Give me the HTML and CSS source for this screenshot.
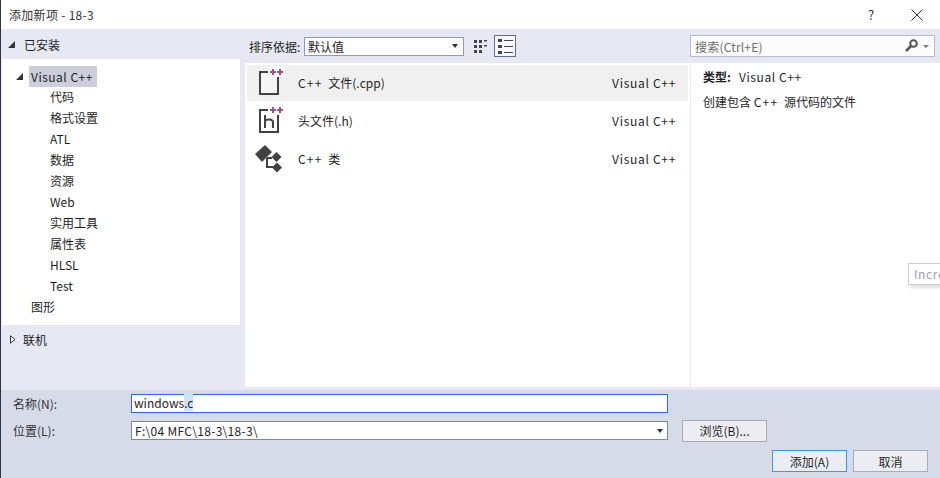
FILE: index.html
```html
<!DOCTYPE html>
<html lang="zh-CN">
<head>
<meta charset="utf-8">
<title>添加新项 - 18-3</title>
<link rel="stylesheet" href="styles.css">
</head>
<body>
<div class="dialog">
  <header class="titlebar">
    <span class="title">添加新项 - 18-3</span>
    <span class="help">?</span>
    <svg class="close" width="12" height="12" viewBox="0 0 12 12"><path d="M.5.5l11 11M11.500.5l-11 11" stroke="#333" fill="none"/></svg>
  </header>
  <main class="main">
    <aside class="side">
      <div class="side-head"><svg class="tri" width="7" height="7" viewBox="0 0 7 7"><path d="M7 0v7H0z" fill="#333"/></svg><span>已安装</span></div>
      <div class="tree">
        <div class="tree-row top"><svg class="tri" width="7" height="7" viewBox="0 0 7 7"><path d="M7 0v7H0z" fill="#333"/></svg><span class="sel">Visual C++</span></div>
        <div class="tree-row sub">代码</div>
        <div class="tree-row sub">格式设置</div>
        <div class="tree-row sub">ATL</div>
        <div class="tree-row sub">数据</div>
        <div class="tree-row sub">资源</div>
        <div class="tree-row sub">Web</div>
        <div class="tree-row sub">实用工具</div>
        <div class="tree-row sub">属性表</div>
        <div class="tree-row sub">HLSL</div>
        <div class="tree-row sub">Test</div>
        <div class="tree-row mid">图形</div>
      </div>
      <div class="side-foot"><svg class="tri-open" width="6" height="9" viewBox="0 0 6 9"><path d="M.5.8l4.500 3.700-4.500 3.700z" fill="#fff" stroke="#333"/></svg><span>联机</span></div>
    </aside>
    <section class="center">
      <div class="toolbar">
        <span class="sort-label">排序依据:</span>
        <div class="sort-select"><span>默认值</span><i class="caret"></i></div>
        <span class="view-btn grid"><svg width="14" height="14" viewBox="0 0 14 14" fill="#444"><path d="M0 0h3v3H0zM5 0h3v3H5zM10 0h3v1.500h-3zM0 5h3v3H0zM5 5h3v3H5zM10 5h3v1.500h-3zM0 10h3v3H0zM5 10h3v3H5z"/></svg></span>
        <span class="view-btn on"><svg width="15" height="15" viewBox="0 0 15 15" fill="#444"><path d="M0 0h4v3H0zM0 6h4v3H0zM0 12h4v3H0zM6 1h9v1H6zM6 7h9v1H6zM6 13h9v1H6z"/></svg></span>
      </div>
      <div class="list">
        <div class="item active">
          <svg class="item-icon" width="30" height="30" viewBox="0 0 30 30"><rect x="10" y="-1" width="17" height="10" rx="2" fill="#fff"/><path d="M10 4H2v22h18V9" fill="#f6f6f6" stroke="#424242" stroke-width="2"/><path d="M12 3h6v2h-6zM14 1h2v6h-2zM19 3h6v2h-6zM21 1h2v6h-2z" fill="#a04ca0"/></svg>
          <span class="name"><span class="cpp">C++</span> 文件(.cpp)</span><span class="lang">Visual C++</span>
        </div>
        <div class="item">
          <svg class="item-icon" width="30" height="30" viewBox="0 0 30 30"><path d="M10 4H2v22h18V9" fill="none" stroke="#424242" stroke-width="2"/><path d="M7 9v13M7 15c1-2 8-2.500 8 1.500V22" fill="none" stroke="#424242" stroke-width="2"/><path d="M12 3h6v2h-6zM14 1h2v6h-2zM19 3h6v2h-6zM21 1h2v6h-2z" fill="#a04ca0"/></svg>
          <span class="name">头文件(.h)</span><span class="lang">Visual C++</span>
        </div>
        <div class="item">
          <svg class="item-icon cls" width="30" height="30" viewBox="0 0 30 30"><path d="M-3 10l10-9 7 7-10 10z" fill="#424242"/><path d="M18.500 8l5 5-5 5-5-5zM19 18.500l5 5-5 5-5-5z" fill="#424242"/><path d="M9 14v9h6M9 14h5" fill="none" stroke="#424242" stroke-width="2"/></svg>
          <span class="name"><span class="cpp">C++</span> 类</span><span class="lang">Visual C++</span>
        </div>
      </div>
    </section>
    <section class="right">
      <div class="search-wrap">
        <div class="search"><span class="ph">搜索(Ctrl+E)</span>
          <svg width="13" height="14" viewBox="0 0 13 14"><circle cx="8.500" cy="4.500" r="3.300" fill="none" stroke="#555" stroke-width="2"/><path d="M6 7l-5 5" stroke="#555" stroke-width="2.500"/></svg><i class="caret small"></i></div>
      </div>
      <div class="info">
        <div class="info-type"><b>类型:</b>Visual C++</div>
        <div class="info-desc">创建包含 <span class="cpp">C++</span> 源代码的文件</div>
      </div>
    </section>
  </main>
  <footer class="bottom">
    <div class="field">
      <label>名称(N):</label>
      <div class="input focus">windows<span class="hl">.c</span></div>
    </div>
    <div class="field">
      <label>位置(L):</label>
      <div class="input loc"><span>F:\04 MFC\18-3\18-3\</span><i class="caret"></i></div>
      <button class="btn browse">浏览(B)...</button>
    </div>
    <div class="actions">
      <button class="btn primary">添加(A)</button>
      <button class="btn">取消</button>
    </div>
  </footer>
  <div class="tooltip">Incre</div>
</div>
</body>
</html>
```
FILE: styles.css
```css
* { box-sizing: border-box; }
html, body { margin: 0; height: 100%; overflow: hidden; }
body { font: 12px/17px "Noto Sans CJK SC", "Noto Sans", sans-serif; color: #1e1e1e; background: #fff; }
.dialog { position: relative; width: 940px; height: 478px; border-left: 1px solid #2e3347; display: flex; flex-direction: column; overflow: hidden; }
.titlebar { height: 29px; flex: none; display: flex; align-items: center; padding-left: 8px; background: #fff; }
.title { flex: 1; color: #333; letter-spacing: .3px; }
.help { width: 14px; margin-right: 29px; font-size: 13px; color: #333; }
.close { margin-right: 17px; }
.main { height: 361px; flex: none; display: flex; background: #e6e9f4; padding-bottom: 3px; }
.side { width: 238px; margin-left: 1px; flex: none; display: flex; flex-direction: column; }
.side-head { height: 30px; flex: none; display: flex; align-items: center; padding-left: 6px; gap: 9px; }
.tree { height: 266px; flex: none; background: #fff; padding-top: 7px; }
.tree-row { height: 21px; display: flex; align-items: center; white-space: nowrap; }
.tree-row.top { padding-left: 14px; gap: 6px; }
.sel { background: #cccedb; height: 21px; line-height: 21px; padding: 0 2px; width: 68px; letter-spacing: .5px; }
.tree-row.sub { padding: 0 0 2px 48px; }
.tree-row.mid { padding: 0 0 2px 29px; }
.side-foot { flex: 1; display: flex; align-items: flex-start; padding: 6px 0 0 8px; gap: 7px; }
.tri-open { margin-top: 4px; }
.center { width: 445px; margin-left: 5px; flex: none; display: flex; flex-direction: column; }
.toolbar { height: 34px; flex: none; display: flex; align-items: center; padding-left: 4px; }
.sort-label { width: 55px; }
.sort-select { width: 160px; height: 19px; border: 1px solid #8e9bbc; background: #fff; display: flex; align-items: center; justify-content: space-between; padding: 0 5px 0 3px; margin-right: 8px; }
.caret { display: block; width: 0; height: 0; border: 3.500px solid transparent; border-top: 4px solid #333; border-bottom: 0; }
.caret.small { border-top-color: #777; border-width: 3px 3px 0; }
.view-btn { width: 22px; height: 22px; display: flex; align-items: center; justify-content: center; border: 1px solid transparent; }
.view-btn.grid { justify-content: flex-start; padding: 2px 0 0 1px; }
.view-btn.on { border-color: #5d6b99; background: #f6f7fb; }
.list { flex: 1; background: #fff; padding: 2px; }
.item { height: 38px; display: flex; align-items: center; padding: 0 12px 0 11px; }
.item.active { height: 36px; padding-bottom: 2px; background: #f0f0f0; }
.item-icon { flex: none; margin-right: 10px; margin-top: 2px; overflow: visible; }
.name { flex: 1; }
.cpp { letter-spacing: 1.200px; margin-right: 3px; }
.lang { letter-spacing: .7px; }
.right { flex: 1; margin-left: 1px; display: flex; flex-direction: column; }
.search-wrap { height: 34px; flex: none; padding-top: 6px; }
.search { width: 245px; height: 22px; margin-left: -1px; border: 1px solid #b4bcd2; background: #fcfcfd; display: flex; align-items: center; padding: 0 5px 0 4px; gap: 5px; }
.ph { flex: 1; color: #6d6d6d; letter-spacing: .2px; }
.info { flex: 1; background: #fff; padding: 5px 12px; }
.info-type { height: 22px; letter-spacing: .6px; }
.info-type b { font-weight: 700; margin-right: 8px; letter-spacing: 0; }
.info-desc { margin-top: 3px; }
.bottom { flex: 1; background: #d6dbe9; padding-top: 4px; position: relative; }
.field { display: flex; align-items: center; height: 19px; margin-bottom: 8px; }
.field label { width: 119px; padding-left: 12px; flex: none; color: #333; }
.input { width: 537px; margin-left: 11px; height: 19px; background: #fff; border: 1px solid #3161ff; padding-left: 2px; line-height: 16px; }
.hl { background: #cfe2f7; }
.input.loc { border-color: #828790; display: flex; justify-content: space-between; align-items: center; padding: 0 4px 0 3px; letter-spacing: .3px; }
.btn { font: inherit; color: #1e1e1e; background: #ecedf2; border: 1px solid #acacac; padding: 0; height: 22px; width: 75px; }
.browse { width: 85px; margin-left: 14px; flex: none; }
.actions { display: flex; justify-content: flex-end; gap: 6px; padding-right: 12px; margin-top: 10px; }
.primary { border-color: #3399ff; }
.tooltip { position: absolute; left: 907px; top: 263px; width: 60px; height: 22px; border: 1px solid #ccc; background: #fff; color: #9aa0b0; padding-left: 5px; line-height: 20px; box-shadow: 2px 3px 3px rgba(0,0,0,.12); font-size: 12px; letter-spacing: .6px; }
```
